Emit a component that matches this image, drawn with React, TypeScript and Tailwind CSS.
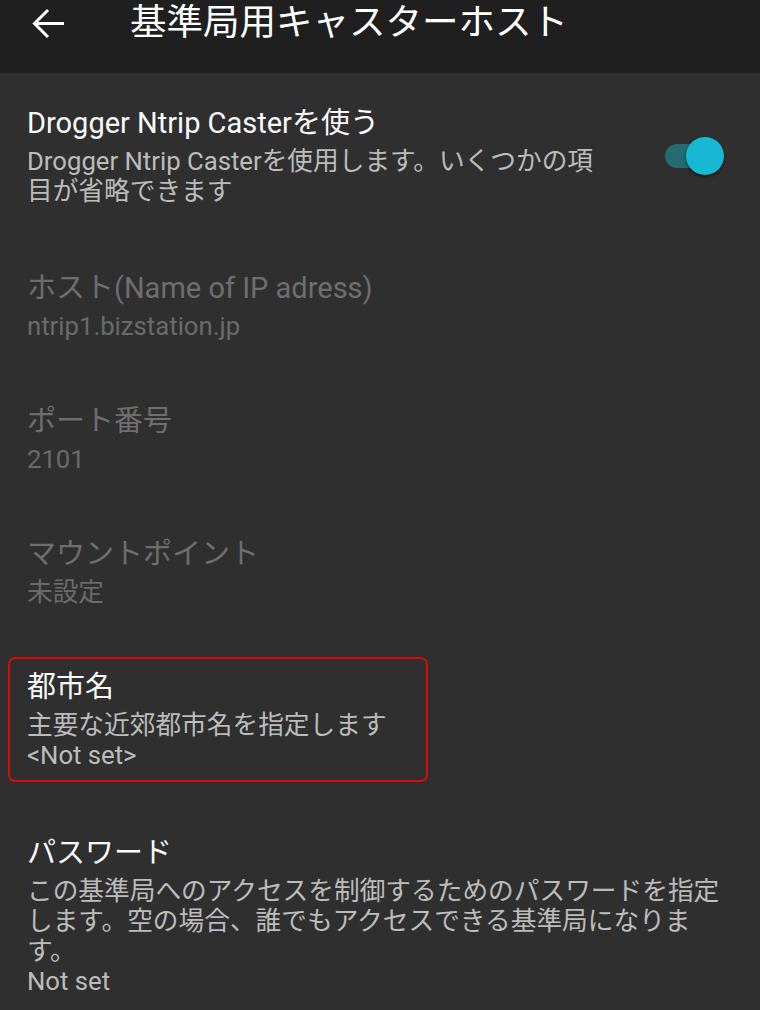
import type { ReactNode } from "react";

type Pref = {
  title: string;
  summary: string[];
  disabled?: boolean;
};

const prefs: Pref[] = [
  { title: "ホスト(Name of IP adress)", summary: ["ntrip1.bizstation.jp"], disabled: true },
  { title: "ポート番号", summary: ["2101"], disabled: true },
  { title: "マウントポイント", summary: ["未設定"], disabled: true },
];

const font = { fontFamily: 'Roboto, "Noto Sans CJK JP", sans-serif' };

const Switch = () => (
  <div className="relative w-[60px] h-[38px] shrink-0">
    <div className="absolute left-0 top-[7px] w-[50px] h-[24px] rounded-full bg-[#246a70]" />
    <div className="absolute left-[21px] top-0 w-[38px] h-[38px] rounded-full bg-[#17b8d3] shadow-[0_2px_3px_rgba(0,0,0,0.5)]" />
  </div>
);

const PrefItem = ({ pref, pb = "pb-[32px]", children }: { pref: Pref; pb?: string; children?: ReactNode }) => (
  <div className={`relative flex items-center pl-[27px] pr-[24px] pt-[30px] ${pb}`}>
    <div className="flex-1">
      <div className={`text-[29px] leading-[36px] ${pref.disabled ? "text-[#6e6e6e]" : "text-[#fafafa]"}`}>
        {pref.title}
      </div>
      <div className={`mt-[5px] text-[25.7px] leading-[30px] ${pref.disabled ? "text-[#6a6a6a]" : "text-[#bcbcbc]"}`}>
        {pref.summary.map((s, i) => (
          <div key={i}>{s}</div>
        ))}
      </div>
    </div>
    {children}
  </div>
);

export default function App() {
  return (
    <div className="w-[760px] h-[1010px] overflow-hidden bg-[#2f2f2f]" style={font}>
      <header className="h-[73px] bg-[#1f1f1f] flex items-start">
        <div className="w-[130px] pl-[32px] pt-[8px]">
          <svg width="34" height="32" viewBox="0 0 34 32" fill="none" stroke="#ffffff" strokeWidth="3">
            <path d="M3 15.5 H32" />
            <path d="M16 2 L2.5 15.5 L16 29" />
          </svg>
        </div>
        <h1 className="text-[36.5px] leading-[46px] text-white">基準局用キャスターホスト</h1>
      </header>

      <div className="pt-[2px]">
        <div className="flex items-center pl-[27px] pr-[35px] pt-[30px] pb-[34px]">
          <div className="w-[580px]">
            <div className="text-[29px] leading-[36px] text-[#fafafa]">Drogger Ntrip Casterを使う</div>
            <div className="mt-[5px] text-[25.7px] leading-[30px] text-[#bcbcbc]">
              Drogger Ntrip Casterを使用します。いくつかの項目が省略できます
            </div>
          </div>
          <div className="ml-auto">
            <Switch />
          </div>
        </div>

        {prefs.map((p) => (
          <PrefItem key={p.title} pref={p} />
        ))}

        <PrefItem pb="pb-[35px]" pref={{ title: "都市名", summary: ["主要な近郊都市名を指定します", "<Not set>"] }}>
          <div className="absolute left-[8px] top-[18px] bottom-[23px] w-[420px] border-2 border-[#d40c0c] rounded-[7px] pointer-events-none" />
        </PrefItem>

        <PrefItem
          pref={{
            title: "パスワード",
            summary: [
              "この基準局へのアクセスを制御するためのパスワードを指定します。空の場合、誰でもアクセスできる基準局になります。",
              "Not set",
            ],
          }}
        />
      </div>
    </div>
  );
}
